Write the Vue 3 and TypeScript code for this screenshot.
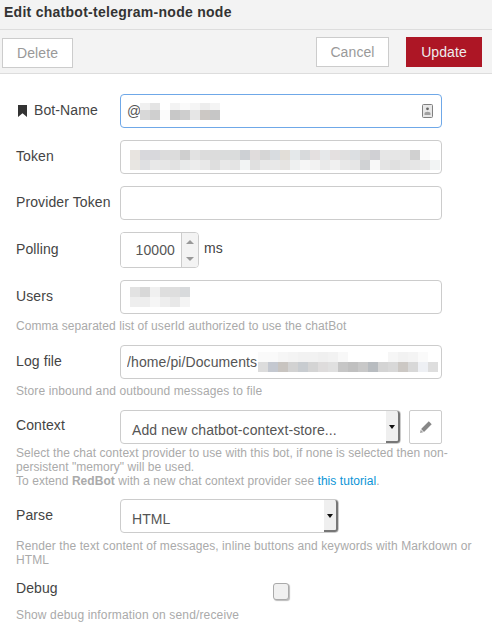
<script setup lang="ts">
import { ref } from 'vue'

interface Blur {
  cols: number
  cells: string[]
}

const toGrid = (rows: string[]): string[] => rows.join(' ').split(' ').map((c) => '#' + c)

const botBlur: Blur = {
  cols: 8,
  cells: toGrid([
    'f0f0f0 e4e4e4 fff f3f3f3 fafafa f5f5f5 ededed f4f4f4',
    'd8d8d8 cfcfcf fbfbfb c8c8c8 cecece e6e6e6 ccc8c4 c6c6c6'
  ])
}

const tokenBlur: Blur = {
  cols: 31,
  cells: toGrid([
    'e8e4e0 d8d8dc d8d8dc dcdcdc dcdcdc cfcfcf e2e2e2 dcdcdc dcdcdc dadcdc dadcdc cdd0d4 e0dcdc d6d6d6 d8dce0 e2ded8 e4e8ea d8dadc e4e0e0 e6e8ea e4e0e0 e0e0e0 dcdfe2 d8d8d8 d0d0d4 e6e6e6 e6e6e6 e4e4e4 d0d0d0 fafafa fff',
    'e8e6e2 dfe0e2 e8e8e8 e6e6e6 e2e2e2 e8eaea ececec e8e8e8 dedede e8e8e8 e4e4e4 f2f4f4 e0e0e0 e8e8e8 e8e8e8 e6e4e2 eef0f0 f6f6f6 f2f2f2 eaeaea f0f0f0 e8e8e8 e6e6e6 d0d2d4 f8f8f8 e4e4e4 e0e0e0 e4e4e4 e6e6e6 e8e8e8 f2f4f4'
  ])
}

const usersBlur: Blur = {
  cols: 6,
  cells: toGrid([
    'e2e2e2 d8d8d8 f0f0f0 dedede dedede d8dadc',
    'eeeeee eeeeee f6f6f6 eeeeee e8e8e8 f4f4f4'
  ])
}

const logBlur: Blur = {
  cols: 18,
  cells: toGrid([
    'fafafa fafafa f6f6f6 f4f4f4 f2f2f2 f2f2f2 f0f0f0 f2f2f2 f8f8f8 fff fff fff fff f6f6f6 f2f2f2 f4f4f4 fafafa fff',
    'dcdcdc c4c8d0 c8c4c0 d2d2d2 c8ccd0 d4d4d4 dedcdc e0e0e0 c6c6c6 c0c0c0 c8c8c8 b8bcc0 d4d4d4 d8d8d8 ccc8c4 d8d8d8 eef0f4 dedede'
  ])
}

const users = ref('')
const polling = ref(10000)
const debug = ref(false)
</script>

<template>
  <div class="dialog">
    <div class="title">Edit chatbot-telegram-node node</div>
    <div class="toolbar">
      <button class="btn delete">Delete</button>
      <div class="actions">
        <button class="btn cancel">Cancel</button>
        <button class="btn update">Update</button>
      </div>
    </div>

    <form class="form" @submit.prevent>
      <div class="row">
        <label class="bot-label">
          <svg class="bookmark" width="9" height="12" viewBox="0 0 9 12">
            <path d="M0 0h9v12L4.500 8.300 0 12z" fill="#333" />
          </svg>
          Bot-Name
        </label>
        <div class="field">
          <input class="input focused" type="text" value="@" />
          <div class="blur bot-blur" :style="{ gridTemplateColumns: `repeat(${botBlur.cols}, 10px)` }">
            <i v-for="(c, i) in botBlur.cells" :key="i" :style="{ background: c }"></i>
          </div>
          <svg class="contact" width="11" height="14" viewBox="0 0 11 14">
            <rect x="0.500" y="0.500" width="10" height="13" rx="1" fill="#e8e8e8" stroke="#808080" />
            <circle cx="5.500" cy="4.800" r="1.400" fill="#666" />
            <path d="M2.500 11V9.500Q2.500 7.800 5.500 7.800t3 1.700V11z" fill="#a0a0a0" />
          </svg>
        </div>
      </div>

      <div class="row">
        <label>Token</label>
        <div class="field">
          <input class="input" type="text" />
          <div class="blur token-blur" :style="{ gridTemplateColumns: `repeat(${tokenBlur.cols}, 10px)` }">
            <i v-for="(c, i) in tokenBlur.cells" :key="i" :style="{ background: c }"></i>
          </div>
        </div>
      </div>

      <div class="row">
        <label>Provider Token</label>
        <div class="field">
          <input class="input" type="text" />
        </div>
      </div>

      <div class="row polling">
        <label>Polling</label>
        <div class="spinner">
          <input v-model="polling" class="spin-input" type="text" />
          <div class="spin-btns">
            <span class="up"></span>
            <span class="down"></span>
          </div>
        </div>
        <span class="unit">ms</span>
      </div>

      <div class="row tight">
        <label>Users</label>
        <div class="field">
          <input v-model="users" class="input" type="text" />
          <div class="blur users-blur" :style="{ gridTemplateColumns: `repeat(${usersBlur.cols}, 10px)` }">
            <i v-for="(c, i) in usersBlur.cells" :key="i" :style="{ background: c }"></i>
          </div>
        </div>
      </div>
      <div class="hint hint-users">Comma separated list of userId authorized to use the chatBot</div>

      <div class="row tight">
        <label>Log file</label>
        <div class="field">
          <input class="input" type="text" value="/home/pi/Documents" />
          <div class="blur log-blur" :style="{ gridTemplateColumns: `repeat(${logBlur.cols}, 10px)` }">
            <i v-for="(c, i) in logBlur.cells" :key="i" :style="{ background: c }"></i>
          </div>
        </div>
      </div>
      <div class="hint hint-log">Store inbound and outbound messages to file</div>

      <div class="row context-row">
        <label>Context</label>
        <div class="select-box context-select">
          <span>Add new chatbot-context-store...</span>
          <span class="caret"></span>
        </div>
        <button class="edit-btn" type="button">
          <svg width="14" height="14" viewBox="0 0 14 14">
            <path d="M9.800 1.300 12.700 4.200 5 11.900 2.100 9z" fill="#888" />
            <path d="M1.700 9.700 4.300 12.300 1 13z" fill="#a0a0a0" />
          </svg>
        </button>
      </div>
      <div class="hint hint-context">
        Select the chat context provider to use with this bot, if none is selected then non-persistent "memory" will be used.<br />
        To extend <b>RedBot</b> with a new chat context provider see <a href="#">this tutorial</a>.
      </div>

      <div class="row parse-row">
        <label>Parse</label>
        <div class="select-box parse-select">
          <span>HTML</span>
          <span class="caret"></span>
        </div>
      </div>
      <div class="hint hint-parse">Render the text content of messages, inline buttons and keywords with Markdown or HTML</div>

      <div class="row debug-row">
        <label>Debug</label>
        <input v-model="debug" class="check" type="checkbox" />
      </div>
      <div class="hint hint-debug">Show debug information on send/receive</div>
    </form>
  </div>
</template>

<style>
html,
body {
  margin: 0;
  background: #fff;
}
</style>

<style scoped>
.dialog {
  width: 492px;
  height: 644px;
  overflow: hidden;
  font-family: "Liberation Sans", Arial, sans-serif;
  font-size: 14px;
  letter-spacing: 0.1px;
  color: #444;
}

.title {
  height: 30px;
  line-height: 24px;
  padding-left: 4px;
  box-sizing: border-box;
  background: #f3f3f3;
  border-bottom: 1px solid #ddd;
  font-size: 14px;
  font-weight: bold;
  letter-spacing: 0.27px;
  color: #333;
}

.toolbar {
  height: 44px;
  box-sizing: border-box;
  display: flex;
  justify-content: space-between;
  padding: 7px 10px 0 2px;
  background: #f3f3f3;
  border-bottom: 1px solid #ddd;
}

.actions {
  display: flex;
  gap: 17px;
}

.btn {
  height: 30px;
  border: 1px solid #ccc;
  background: #fff;
  color: #999;
  font-family: inherit;
  font-size: 14px;
  letter-spacing: inherit;
  padding: 0;
}

.delete {
  width: 71px;
  margin-top: 1px;
}

.cancel {
  width: 73px;
}

.update {
  width: 76px;
  background: #ad1625;
  border-color: #ad1625;
  color: #eee;
}

.form {
  padding: 20px 0 0 16px;
}

.row {
  display: flex;
  align-items: flex-start;
  margin-bottom: 12px;
}

.row.tight {
  margin-bottom: 5px;
}

.row.context-row {
  margin-bottom: 2px;
}

.row.parse-row {
  margin-bottom: 6px;
}

.row label {
  width: 104px;
  flex: none;
  padding-top: 8px;
  line-height: 17px;
}

.row.context-row label {
  padding-top: 7px;
}

.row.polling label {
  padding-top: 9px;
}

.row .bot-label {
  display: flex;
  align-items: center;
  box-sizing: border-box;
  padding-left: 2px;
  gap: 7px;
}

.bookmark {
  flex: none;
}

.field {
  position: relative;
  width: 322px;
  height: 34px;
}

.input {
  width: 100%;
  height: 100%;
  box-sizing: border-box;
  border: 1px solid #ccc;
  border-radius: 4px;
  padding: 0 6px;
  font-family: inherit;
  font-size: 14px;
  letter-spacing: inherit;
  color: #555;
  outline: none;
  background: #fff;
}

.input.focused {
  border-color: #6fa8e8;
}

.blur {
  position: absolute;
  display: grid;
  grid-auto-rows: 10px;
  pointer-events: none;
}

.bot-blur {
  left: 20px;
  top: 9px;
  grid-template-rows: 7px 10px;
}

.token-blur {
  left: 10px;
  top: 10px;
  width: 311px;
  overflow: hidden;
}

.users-blur {
  left: 10px;
  top: 7px;
}

.log-blur {
  left: 138px;
  top: 7px;
  width: 183px;
  overflow: hidden;
}

.contact {
  position: absolute;
  right: 9px;
  top: 10px;
}

.polling {
  align-items: flex-start;
  margin-bottom: 12px;
}

.spinner {
  display: flex;
  width: 79px;
  height: 36px;
  box-sizing: border-box;
  border: 1px solid #ccc;
  border-radius: 4px;
  overflow: hidden;
}

.spin-input {
  width: 60px;
  box-sizing: border-box;
  border: 0;
  padding: 0 6px 0 0;
  text-align: right;
  font-family: inherit;
  font-size: 14px;
  letter-spacing: inherit;
  color: #555;
  outline: none;
}

.spin-btns {
  flex: 1;
  display: flex;
  flex-direction: column;
  align-items: center;
  justify-content: center;
  gap: 13px;
  background: #f3f3f3;
  border-left: 1px solid #ccc;
}

.up,
.down {
  width: 0;
  height: 0;
  border-left: 4px solid transparent;
  border-right: 4px solid transparent;
}

.up {
  border-bottom: 4px solid #999;
}

.down {
  border-top: 4px solid #999;
}

.unit {
  margin: 8px 0 0 5px;
  line-height: 17px;
}

.hint {
  font-size: 12px;
  line-height: 14px;
  color: #aaa;
  width: 458px;
  letter-spacing: 0.07px;
}

.hint a {
  color: #0a94d6;
  text-decoration: none;
}

.hint-users {
  margin-bottom: 12px;
}

.hint-log {
  margin-bottom: 12px;
  letter-spacing: 0.11px;
}

.hint-context {
  margin-bottom: 11px;
  letter-spacing: 0.05px;
}

.hint-parse {
  margin-bottom: 14px;
  letter-spacing: 0.09px;
}

.hint-debug {
  letter-spacing: 0.15px;
}

.select-box {
  position: relative;
  height: 34px;
  box-sizing: border-box;
  border: 1px solid #ccc;
  border-radius: 4px;
  background: #fff;
  padding: 10px 0 0 11px;
  line-height: 18px;
  color: #555;
  font-size: 14px;
}

.caret {
  position: absolute;
  right: 0;
  top: 0;
  bottom: 0;
  width: 14px;
  background: #efefef;
  border-right: 2px solid #777;
  border-bottom: 2px solid #777;
  border-radius: 0 3px 3px 0;
  box-sizing: border-box;
}

.caret::after {
  content: "";
  position: absolute;
  left: 3px;
  top: 14px;
  border-left: 3px solid transparent;
  border-right: 3px solid transparent;
  border-top: 4px solid #111;
}

.context-select {
  width: 281px;
}

.parse-select {
  width: 219px;
}

.edit-btn {
  width: 33px;
  height: 34px;
  margin-left: 8px;
  padding: 0;
  border: 1px solid #ccc;
  border-radius: 2px;
  background: #fff;
  display: flex;
  align-items: center;
  justify-content: center;
}

.debug-row {
  height: 22px;
  margin-bottom: 5px;
}

.debug-row label {
  padding-top: 0;
  margin-top: -1px;
}

.check {
  appearance: none;
  width: 16px;
  height: 17px;
  box-sizing: border-box;
  margin: 2px 0 0 153px;
  border: 1px solid #aaa;
  border-radius: 3px;
  background: #f0f0f0;
  box-shadow: 1px 1px 1px #bbb;
}
</style>
